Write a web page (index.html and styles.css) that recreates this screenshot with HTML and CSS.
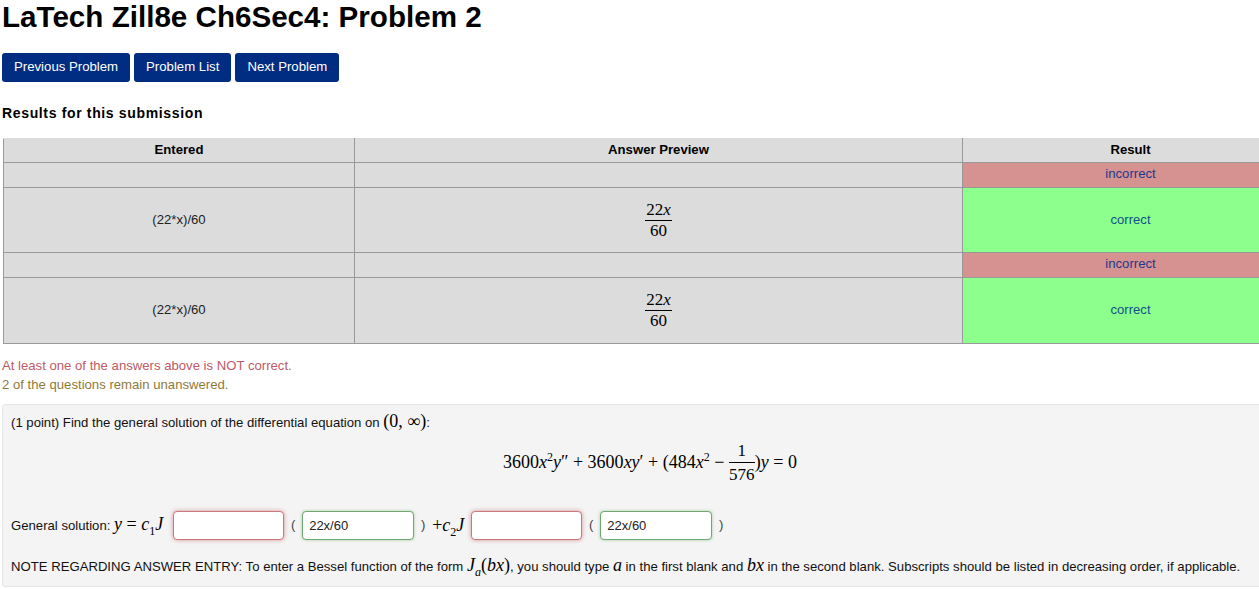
FILE: index.html
```html
<!DOCTYPE html>
<html lang="en">
<head>
    <meta charset="UTF-8">
    <meta name="viewport" content="width=device-width, initial-scale=1.0">
    <title>LaTech Zill8e Ch6Sec4: Problem 2</title>
    <link rel="stylesheet" href="styles.css">
</head>
<body>
    <h1>LaTech Zill8e Ch6Sec4: Problem 2</h1>

    <div class="nav-buttons">
        <a class="nav-btn" href="#">Previous Problem</a>
        <a class="nav-btn" href="#">Problem List</a>
        <a class="nav-btn" href="#">Next Problem</a>
    </div>

    <h2>Results for this submission</h2>

    <table class="results">
        <thead>
            <tr>
                <th class="col-entered">Entered</th>
                <th class="col-preview">Answer Preview</th>
                <th class="col-result">Result</th>
            </tr>
        </thead>
        <tbody>
            <tr class="row-short">
                <td></td>
                <td></td>
                <td class="incorrect">incorrect</td>
            </tr>
            <tr class="row-tall">
                <td>(22*x)/60</td>
                <td>
                    <span class="frac preview-frac">
                        <span class="num">22<i>x</i></span>
                        <span class="den">60</span>
                    </span>
                </td>
                <td class="correct">correct</td>
            </tr>
            <tr class="row-short">
                <td></td>
                <td></td>
                <td class="incorrect">incorrect</td>
            </tr>
            <tr class="row-tall last">
                <td>(22*x)/60</td>
                <td>
                    <span class="frac preview-frac">
                        <span class="num">22<i>x</i></span>
                        <span class="den">60</span>
                    </span>
                </td>
                <td class="correct">correct</td>
            </tr>
        </tbody>
    </table>

    <div class="summary">
        <div class="msg-wrong">At least one of the answers above is NOT correct.</div>
        <div class="msg-blank">2 of the questions remain unanswered.</div>
    </div>

    <div class="problem">
        <p class="intro">(1 point) Find the general solution of the differential equation on <span class="math big">(0, ∞)</span>:</p>

        <div class="equation math">
            <span>3600<i>x</i><sup>2</sup><i>y</i>″ + 3600<i>xy</i>′ + (484<i>x</i><sup>2</sup> −&nbsp;</span>
            <span class="frac eq-frac">
                <span class="num">1</span>
                <span class="den">576</span>
            </span>
            <span>)<i>y</i> = 0</span>
        </div>

        <div class="answer-line">
            <span class="label">General solution: <span class="math big"><i>y</i> = <i>c</i><sub>1</sub><i>J</i></span></span>
            <input class="blank wrong" type="text">
            <span class="paren">(</span>
            <input class="blank right" type="text" value="22x/60">
            <span class="paren">)</span>
            <span class="math big plus">+<i>c</i><sub>2</sub><i>J</i></span>
            <input class="blank wrong" type="text">
            <span class="paren">(</span>
            <input class="blank right" type="text" value="22x/60">
            <span class="paren">)</span>
        </div>

        <p class="note">NOTE REGARDING ANSWER ENTRY: To enter a Bessel function of the form <span class="math big"><i>J</i><sub><i>a</i></sub>(<i>bx</i>)</span>, you should type <span class="math big"><i>a</i></span> in the first blank and <span class="math big"><i>bx</i></span> in the second blank. Subscripts should be listed in decreasing order, if applicable.</p>
    </div>
</body>
</html>
```

FILE: styles.css
```css
html {
    overflow: hidden;
}
body {
    font-family: "Liberation Sans", Arial, sans-serif;
    font-size: 13.15px;
    line-height: 20px;
    color: #222;
    background-color: #fff;
    margin: 0;
    padding: 0 0 0 2px;
    width: 1297px;
}
h1 {
    font-size: 29.6px;
    line-height: 34px;
    font-weight: bold;
    color: #000;
    margin: 0 0 19px 0;
}
h2 {
    font-size: 14px;
    line-height: 20px;
    font-weight: bold;
    letter-spacing: 0.65px;
    color: #000;
    margin: 21px 0 15px 0;
}
.nav-buttons {
    display: flex;
    gap: 4px;
}
.nav-btn {
    display: block;
    height: 29px;
    line-height: 27px;
    padding: 0 12px;
    box-sizing: border-box;
    background-color: #002d82;
    color: #fff;
    font-size: 13.2px;
    text-decoration: none;
    border-radius: 3px;
}
.results {
    border-collapse: collapse;
    table-layout: fixed;
    width: 1296px;
    margin-left: 1px;
    font-size: 13.15px;
    color: #222;
}
.results th,
.results td {
    background-color: #dcdcdc;
    border: 1px solid #999;
    padding: 0;
    text-align: center;
    vertical-align: middle;
}
.results th {
    height: 24px;
    padding-bottom: 2px;
    box-sizing: border-box;
    font-weight: bold;
    color: #000;
    border-top-color: #dcdcdc;
}
.col-entered {
    width: 351px;
}
.col-preview {
    width: 608px;
}
.row-short td {
    height: 25px;
    box-sizing: border-box;
    padding-bottom: 3px;
}
.row-tall td {
    height: 64px;
}
.row-tall.last td {
    padding-bottom: 1px;
}
.results td.incorrect {
    background-color: #d69191;
    color: #1a3a8a;
}
.results td.correct {
    background-color: #8cff8c;
    color: #11508a;
}
.summary {
    margin-top: 12px;
    line-height: 19px;
}
.msg-wrong {
    color: #bd5a66;
}
.msg-blank {
    color: #8f7a3a;
}
.problem {
    margin-top: 10px;
    padding: 6px 9px 9px 8px;
    background-color: #f4f4f4;
    border: 1px solid #e6e6e6;
    border-radius: 3px;
    box-sizing: border-box;
    height: 183px;
    color: #111;
}
.intro {
    margin: 0;
    line-height: 21px;
}
.math {
    font-family: "Liberation Serif", "Times New Roman", serif;
    color: #000;
}
.big {
    font-size: 18px;
}
.math sub,
.math sup {
    font-size: 12px;
    line-height: 0;
}
.equation {
    display: flex;
    justify-content: center;
    align-items: center;
    font-size: 18px;
    margin-top: 1px;
    height: 56px;
}
.frac {
    display: inline-flex;
    flex-direction: column;
    align-items: center;
    vertical-align: middle;
    font-family: "Liberation Serif", "Times New Roman", serif;
    color: #000;
}
.frac .num {
    border-bottom: 1px solid #000;
    padding: 0 1px;
    align-self: stretch;
    text-align: center;
}
.preview-frac {
    font-size: 17px;
    line-height: 20px;
    min-width: 26px;
}
.eq-frac {
    line-height: 23px;
    min-width: 26px;
    font-size: 17px;
}
.answer-line {
    display: flex;
    align-items: center;
    margin-top: 20px;
    height: 30px;
}
.label {
    margin-top: -1px;
}
.plus {
    margin: -1px 1px 0 0;
}
.blank {
    width: 111px;
    height: 29px;
    box-sizing: border-box;
    padding: 0 6px;
    font-family: "Liberation Sans", Arial, sans-serif;
    font-size: 13px;
    color: #222;
    background-color: #fff;
    border-radius: 4px;
    outline: none;
}
.blank.wrong {
    border: 1px solid #c9787c;
    box-shadow: 0 0 4px rgba(191, 84, 88, 0.6);
    margin-left: 6px;
}
.label + .blank.wrong {
    margin-left: 10px;
}
.blank.right {
    width: 112px;
    border: 1px solid #70a870;
    box-shadow: 0 0 3px rgba(81, 153, 81, 0.5);
}
.paren {
    color: #444;
    width: 18px;
    text-align: center;
}
.note {
    margin: 14px 0 0 0;
    line-height: 22px;
    white-space: nowrap;
}
```
